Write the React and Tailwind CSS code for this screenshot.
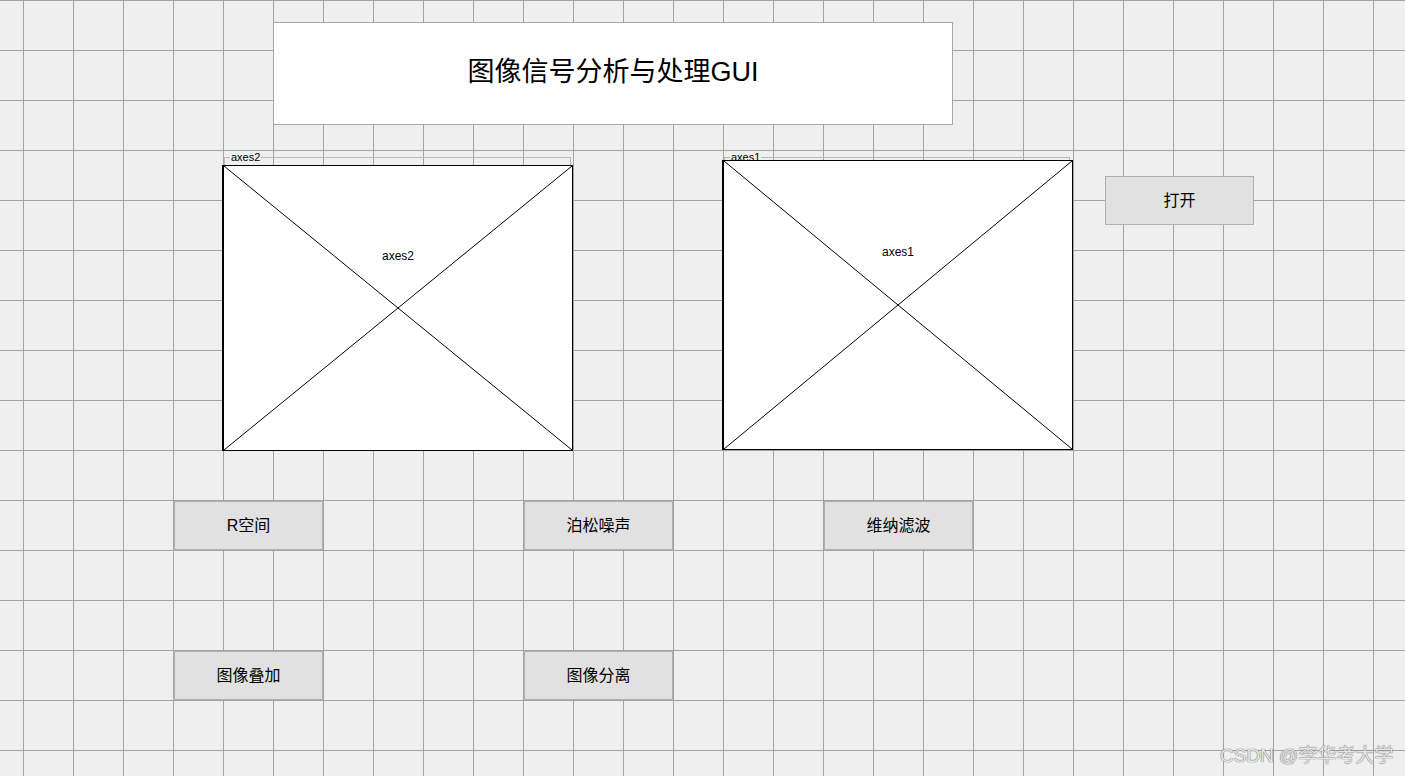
import React from "react";

const FONT = "font-['Liberation_Sans','Noto_Sans_CJK_SC',sans-serif]";

function Axes({ name, frame, box, labelTop }) {
  return (
    <>
      <div className={`absolute border border-[#b9b9b9] ${frame}`}>
        <span className={`absolute left-[5px] -top-[6px] bg-[#efefef] px-[1px] text-[11px] leading-[11px] text-black ${FONT}`}>
          {name}
        </span>
      </div>
      <div className={`absolute bg-white border border-black border-l-2 ${box}`}>
        <svg className="absolute inset-0 w-full h-full" viewBox="0 0 100 100" preserveAspectRatio="none">
          <line x1="0" y1="0" x2="100" y2="100" stroke="#000" strokeWidth="1" vectorEffect="non-scaling-stroke" />
          <line x1="100" y1="0" x2="0" y2="100" stroke="#000" strokeWidth="1" vectorEffect="non-scaling-stroke" />
        </svg>
        <div className={`absolute left-0 right-0 text-center text-[12px] leading-[14px] text-black ${labelTop} ${FONT}`}>
          {name}
        </div>
      </div>
    </>
  );
}

function Btn({ pos, children }) {
  return (
    <div
      className={`absolute w-[149px] h-[49px] flex items-center justify-center bg-[#e1e1e1] border border-[#b0b0b0] text-[16px] text-black ${FONT} ${pos}`}
    >
      {children}
    </div>
  );
}

export default function App() {
  return (
    <div
      className="relative w-[1405px] h-[776px] overflow-hidden bg-[#efefef] bg-[linear-gradient(to_right,#a3a3a3_1px,transparent_1px),linear-gradient(to_bottom,#a3a3a3_1px,transparent_1px)] [background-size:50px_50px] [background-position:23px_0px]"
    >
      {/* Title panel */}
      <div className={`absolute left-[273px] top-[22px] w-[680px] h-[103px] bg-white border border-[#a8a8a8] flex items-center justify-center text-[27px] text-black ${FONT}`}>
        <span className="-mt-[2px]">图像信号分析与处理GUI</span>
      </div>

      <Axes
        name="axes2"
        frame="left-[224px] top-[157px] w-[347px] h-[20px]"
        box="left-[222px] top-[165px] w-[351px] h-[286px]"
        labelTop="top-[83px]"
      />
      <Axes
        name="axes1"
        frame="left-[724px] top-[157px] w-[346px] h-[10px]"
        box="left-[722px] top-[160px] w-[351px] h-[290px]"
        labelTop="top-[84px]"
      />

      <Btn pos="left-[1105px] top-[176px]">打开</Btn>
      <Btn pos="left-[174px] top-[501px]">R空间</Btn>
      <Btn pos="left-[524px] top-[501px]">泊松噪声</Btn>
      <Btn pos="left-[824px] top-[501px]">维纳滤波</Btn>
      <Btn pos="left-[174px] top-[651px]">图像叠加</Btn>
      <Btn pos="left-[524px] top-[651px]">图像分离</Btn>

      <div className={`absolute left-[1220px] top-[745px] text-[19px] leading-[22px] text-[#e6e6e6] [text-shadow:0_0_1px_#6f6f6f,0_0_1px_#6f6f6f] ${FONT}`}>
        CSDN @李华考大学
      </div>
    </div>
  );
}
